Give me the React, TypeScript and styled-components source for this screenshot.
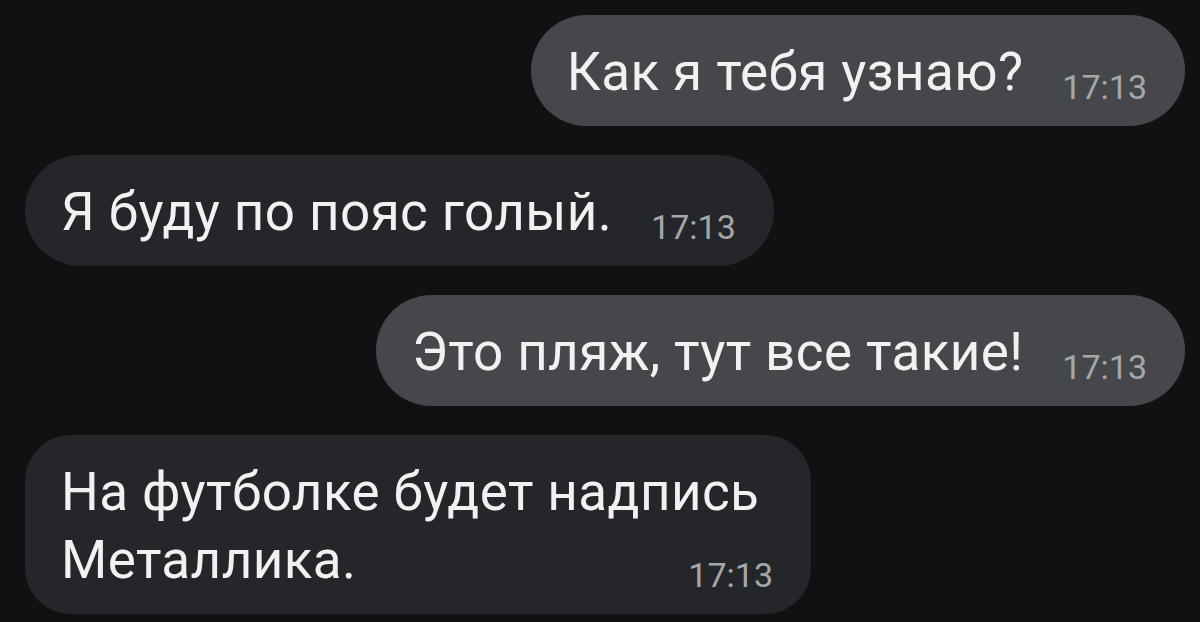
import styled, { createGlobalStyle } from 'styled-components';

const GlobalStyle = createGlobalStyle`
  html, body {
    margin: 0;
    padding: 0;
    background: #111113;
  }
  body {
    font-family: Roboto, "Liberation Sans", sans-serif;
  }
`;

const Chat = styled.div`
  display: flex;
  flex-direction: column;
  gap: 29px;
  padding: 15px 15px 0 25px;
  height: 622px;
  box-sizing: border-box;
  overflow: hidden;
`;

const Bubble = styled.div<{ $out?: boolean; $multi?: boolean }>`
  align-self: ${(p) => (p.$out ? 'flex-end' : 'flex-start')};
  background: ${(p) => (p.$out ? '#45474a' : '#252629')};
  border-radius: ${(p) => (p.$multi ? '46px' : '56px')};
  padding: 23px 38px 20px 36px;
  max-width: ${(p) => (p.$multi ? '712px' : '900px')};
  color: #f1f1f1;
  font-size: 53px;
  line-height: 68px;
  letter-spacing: 0.4px;
`;

const Time = styled.span`
  float: right;
  margin: 32px 0 0 39px;
  font-size: 34px;
  line-height: 34px;
  color: #a6a7a9;
  letter-spacing: 0;
`;

type Msg = { text: string; out?: boolean; multi?: boolean };

const messages: Msg[] = [
  { text: 'Как я тебя узнаю?', out: true },
  { text: 'Я буду по пояс голый.' },
  { text: 'Это пляж, тут все такие!', out: true },
  { text: 'На футболке будет надпись Металлика.', multi: true },
];

export default function App() {
  return (
    <>
      <GlobalStyle />
      <Chat>
        {messages.map((m, i) => (
          <Bubble key={i} $out={m.out} $multi={m.multi}>
            {m.text}
            <Time>17:13</Time>
          </Bubble>
        ))}
      </Chat>
    </>
  );
}
